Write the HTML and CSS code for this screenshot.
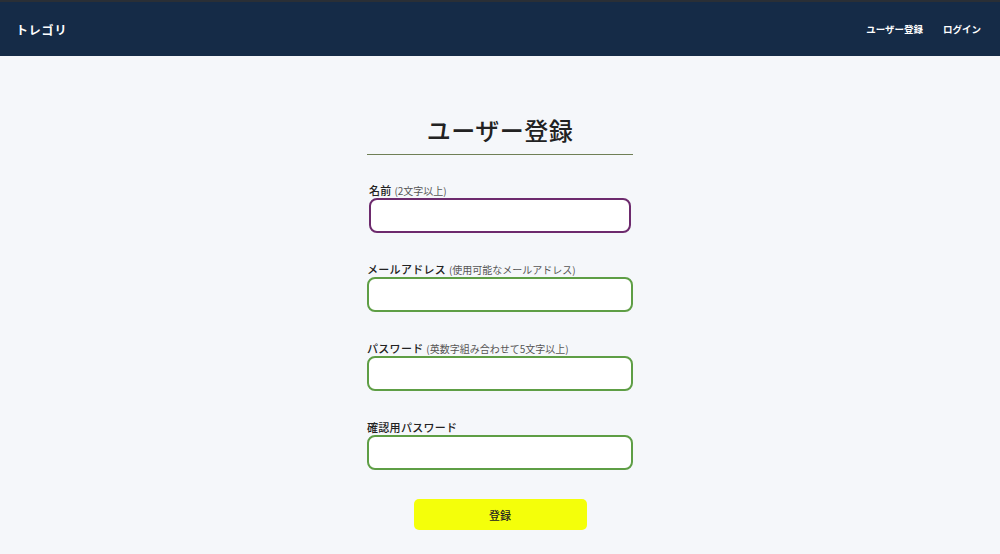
FILE: index.html
```html
<!DOCTYPE html>
<html lang="ja">
<head>
    <meta charset="UTF-8">
    <meta name="viewport" content="width=device-width, initial-scale=1.0">
    <title>ユーザー登録 | トレゴリ</title>
    <link rel="stylesheet" href="styles.css">
</head>
<body>
    <header class="header">
        <div class="logo">トレゴリ</div>
        <nav class="nav">
            <a href="#">ユーザー登録</a>
            <a href="#">ログイン</a>
        </nav>
    </header>

    <main class="main">
        <form class="form">
            <h1 class="title">ユーザー登録</h1>

            <div class="field field-focus">
                <label>名前 <span class="hint">(2文字以上)</span></label>
                <input type="text" class="input">
            </div>

            <div class="field">
                <label>メールアドレス <span class="hint">(使用可能なメールアドレス)</span></label>
                <input type="email" class="input">
            </div>

            <div class="field">
                <label>パスワード <span class="hint">(英数字組み合わせて5文字以上)</span></label>
                <input type="password" class="input">
            </div>

            <div class="field">
                <label>確認用パスワード</label>
                <input type="password" class="input">
            </div>

            <button type="button" class="submit">登録</button>
        </form>
    </main>
</body>
</html>
```

FILE: styles.css
```css
* {
    margin: 0;
    padding: 0;
    box-sizing: border-box;
    font-family: 'Noto Sans CJK JP', 'Noto Sans', sans-serif;
}

body {
    background: #f5f7fa;
    color: #222;
    min-height: 100vh;
}

.header {
    height: 56px;
    background: #152b47;
    border-top: 2px solid #2a2f36;
    display: flex;
    justify-content: space-between;
    align-items: center;
    padding: 0 19px 0 16px;
}

.logo {
    color: #fff;
    font-size: 12px;
    font-weight: bold;
    letter-spacing: 0.8px;
}

.nav {
    display: flex;
    gap: 20px;
}

.nav a {
    color: #fff;
    font-size: 9.5px;
    font-weight: bold;
    text-decoration: none;
}

.main {
    display: flex;
    justify-content: center;
    padding-top: 56px;
}

.form {
    width: 266px;
    display: flex;
    flex-direction: column;
}

.title {
    font-size: 24px;
    font-weight: 500;
    text-align: center;
    line-height: 36px;
    letter-spacing: 0.5px;
    padding-bottom: 6px;
    border-bottom: 1.5px solid #6f7f55;
    margin-bottom: 28px;
}

.field {
    display: flex;
    flex-direction: column;
    margin-bottom: 29px;
}

.field label {
    font-size: 11px;
    font-weight: 500;
    line-height: 15px;
    letter-spacing: 0.3px;
}

.hint {
    font-size: 10px;
    font-weight: normal;
    color: #555;
    letter-spacing: 0;
}

.input {
    height: 35px;
    border: 2px solid #5e9e45;
    border-radius: 8px;
    background: #fff;
    padding: 0 10px;
    outline: none;
}

.field-focus label {
    padding-left: 2px;
}

.field-focus .input {
    margin: 0 2px;
    border-color: #6d2a6d;
}

.submit {
    align-self: center;
    width: 173px;
    height: 31px;
    border: none;
    border-radius: 5px;
    background: #f4ff0a;
    color: #222;
    font-size: 11px;
    font-weight: 500;
    cursor: pointer;
}
```
